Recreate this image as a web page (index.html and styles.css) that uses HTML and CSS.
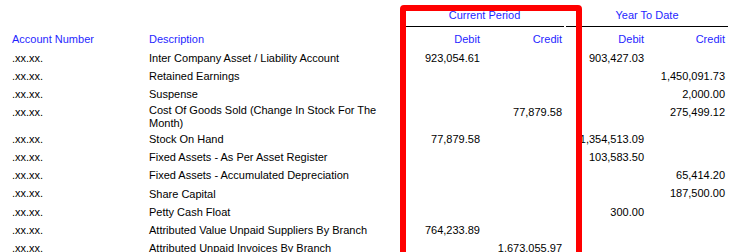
FILE: index.html
```html
<!DOCTYPE html>
<html>
<head>
<meta charset="utf-8">
<link rel="stylesheet" href="styles.css">
</head>
<body>
<div class="page">
  <table class="report">
    <colgroup>
      <col class="c-acct"><col class="c-desc"><col class="c-a1"><col class="c-a2"><col class="c-a3"><col class="c-a4">
    </colgroup>
    <thead>
      <tr class="group-row">
        <th></th><th></th>
        <th colspan="2" class="group cp"><div class="rule">Current Period</div></th>
        <th colspan="2" class="group ytd"><div class="rule">Year To Date</div></th>
      </tr>
      <tr class="head-row">
        <th class="acct">Account Number</th>
        <th class="desc">Description</th>
        <th class="num">Debit</th>
        <th class="num">Credit</th>
        <th class="num">Debit</th>
        <th class="num">Credit</th>
      </tr>
    </thead>
    <tbody>
      <tr><td class="acct">.xx.xx.</td><td class="desc">Inter Company Asset / Liability Account</td><td class="num">923,054.61</td><td class="num"></td><td class="num">903,427.03</td><td class="num"></td></tr>
      <tr><td class="acct">.xx.xx.</td><td class="desc">Retained Earnings</td><td class="num"></td><td class="num"></td><td class="num"></td><td class="num">1,450,091.73</td></tr>
      <tr><td class="acct">.xx.xx.</td><td class="desc">Suspense</td><td class="num"></td><td class="num"></td><td class="num"></td><td class="num">2,000.00</td></tr>
      <tr class="wrap"><td class="acct">.xx.xx.</td><td class="desc">Cost Of Goods Sold (Change In Stock For The Month)</td><td class="num"></td><td class="num">77,879.58</td><td class="num"></td><td class="num">275,499.12</td></tr>
      <tr><td class="acct">.xx.xx.</td><td class="desc">Stock On Hand</td><td class="num">77,879.58</td><td class="num"></td><td class="num">1,354,513.09</td><td class="num"></td></tr>
      <tr><td class="acct">.xx.xx.</td><td class="desc">Fixed Assets - As Per Asset Register</td><td class="num"></td><td class="num"></td><td class="num">103,583.50</td><td class="num"></td></tr>
      <tr><td class="acct">.xx.xx.</td><td class="desc">Fixed Assets - Accumulated Depreciation</td><td class="num"></td><td class="num"></td><td class="num"></td><td class="num">65,414.20</td></tr>
      <tr class="tall"><td class="acct">.xx.xx.</td><td class="desc">Share Capital</td><td class="num"></td><td class="num"></td><td class="num"></td><td class="num">187,500.00</td></tr>
      <tr><td class="acct">.xx.xx.</td><td class="desc">Petty Cash Float</td><td class="num"></td><td class="num"></td><td class="num">300.00</td><td class="num"></td></tr>
      <tr><td class="acct">.xx.xx.</td><td class="desc">Attributed Value Unpaid Suppliers By Branch</td><td class="num">764,233.89</td><td class="num"></td><td class="num"></td><td class="num"></td></tr>
      <tr><td class="acct">.xx.xx.</td><td class="desc">Attributed Unpaid Invoices By Branch</td><td class="num"></td><td class="num">1,673,055.97</td><td class="num"></td><td class="num"></td></tr>
    </tbody>
  </table>
  <div class="highlight"></div>
</div>
</body>
</html>
```

FILE: styles.css
```css
html, body {
  margin: 0;
  padding: 0;
  height: 252px;
  overflow: hidden;
  background: #fff;
}
.page {
  position: relative;
  padding-left: 8px;
  font-family: "Liberation Sans", Arial, sans-serif;
  font-size: 11px;
  color: #000;
}
.report {
  table-layout: fixed;
  border-collapse: collapse;
  border-spacing: 0;
  width: 721px;
}
.c-acct { width: 141px; }
.c-desc { width: 254px; }
.c-a1 { width: 81px; }
.c-a2 { width: 82px; }
.c-a3 { width: 82px; }
.c-a4 { width: 81px; }

.report th, .report td {
  padding: 0;
  font-weight: normal;
  line-height: 18px;
  vertical-align: top;
  white-space: nowrap;
}
.report th {
  color: #1f1fff;
}
.group-row th {
  height: 27px;
}
.group {
  text-align: center;
}
.group .rule {
  margin-top: 6px;
  padding-bottom: 2px;
  border-bottom: 1px solid #000;
}
.cp .rule { margin-left: 2px; margin-right: 2px; }
.ytd .rule { margin-right: 1px; }

.head-row th {
  padding-top: 3px;
  padding-bottom: 1px;
  text-align: left;
}
.report .acct { padding-left: 4px; text-align: left; }
.report .desc { text-align: left; }
.report .num { text-align: right; padding-right: 4px; }

.report tbody tr { height: 18px; }
.report tbody tr.tall { height: 19px; }
.report tbody tr.wrap { height: 27px; }
.report tbody td.desc {
  white-space: normal;
  vertical-align: middle;
  line-height: 13px;
  padding-top: 1px;
  padding-right: 18px;
}

.highlight {
  position: absolute;
  left: 400px;
  top: 5px;
  width: 182px;
  height: 270px;
  box-sizing: border-box;
  border: 6px solid #ff0000;
  border-radius: 4px;
}
```
